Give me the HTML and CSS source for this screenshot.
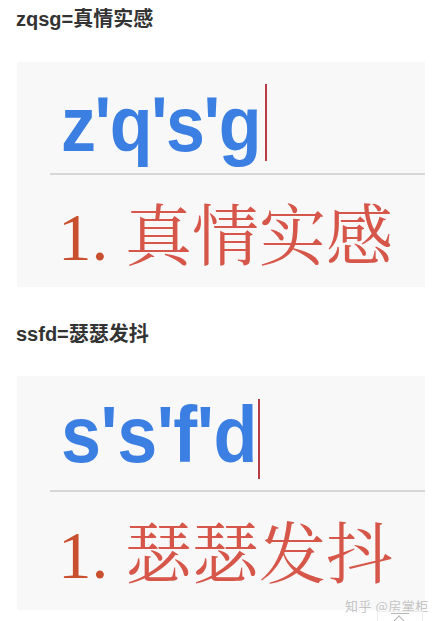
FILE: index.html
```html
<!DOCTYPE html>
<html lang="zh-CN">
<head>
<meta charset="utf-8">
<title>zqsg</title>
<link rel="stylesheet" href="styles.css">
</head>
<body>
<main class="page">
  <p class="title title-first">zqsg=真情实感</p>
  <figure class="shot shot-a">
    <div class="input"><span class="pinyin">z'q's'g</span><span class="caret"></span></div>
    <div class="sep"></div>
    <div class="cand"><span class="num">1.</span> 真情实感</div>
  </figure>
  <p class="title title-second">ssfd=瑟瑟发抖</p>
  <figure class="shot shot-b">
    <div class="input"><span class="pinyin">s's'f'd</span><span class="caret"></span></div>
    <div class="sep"></div>
    <div class="cand"><span class="num">1.</span> 瑟瑟发抖</div>
  </figure>
  <div class="watermark">知乎 @房掌柜</div>
  <div class="totop"><span class="totop-bar"></span><span class="totop-caret"></span></div>
</main>
</body>
</html>
```
FILE: styles.css
```css
html, body {
  margin: 0;
  padding: 0;
  background: #ffffff;
}
.page {
  position: relative;
  height: 621px;
  overflow: hidden;
  display: flex;
  flex-direction: column;
  font-family: "Liberation Sans", "Noto Sans CJK SC", sans-serif;
}
.title {
  margin: 0;
  padding-left: 16px;
  font-size: 20px;
  line-height: 28px;
  font-weight: bold;
  color: #333333;
}
.title-first { margin-top: 5px; }
.title-second { margin-top: 33px; }
.shot {
  margin: 0 0 0 17px;
  width: 408px;
  background: #f8f8f8;
  display: flex;
  flex-direction: column;
}
.shot-a { margin-top: 29px; height: 225px; }
.shot-b { margin-top: 28px; height: 234px; }
.input {
  padding-left: 44px;
  height: 90px;
  font-family: "Liberation Sans", sans-serif;
  font-weight: bold;
  font-size: 70px;
  line-height: 90px;
  color: #3b7fe2;
  white-space: nowrap;
}
.shot-a .input { padding-top: 20px; }
.shot-b .input { padding-top: 16px; }
.pinyin {
  display: inline-block;
  letter-spacing: -1.5px;
  transform: scaleY(1.1);
  transform-origin: 50% 75%;
}
.shot-b .pinyin { font-size: 72px; letter-spacing: -0.5px; }
.caret {
  display: inline-block;
  width: 2px;
  background: #b83a44;
  margin-left: 5px;
}
.shot-a .caret { height: 77px; vertical-align: -10px; }
.shot-b .caret { height: 80px; vertical-align: -17px; margin-left: 1px; }
.sep {
  margin-left: 33px;
  height: 2px;
  background: #d6d6d6;
}
.shot-a .sep { margin-top: 1px; }
.shot-b .sep { margin-top: 8px; }
.cand {
  padding-left: 41px;
  font-family: "Liberation Serif", "Noto Serif CJK SC", "Noto Sans CJK SC", serif;
  font-size: 67px;
  line-height: 80px;
  color: #d6574a;
  white-space: nowrap;
}
.shot-a .cand { padding-top: 22px; }
.shot-b .cand { padding-top: 23px; }
.num { color: #c9502f; }
.watermark {
  position: absolute;
  left: 345px;
  top: 597px;
  font-family: "Noto Sans CJK SC", sans-serif;
  font-size: 13px;
  line-height: 18px;
  color: #c4c4c4;
  letter-spacing: 0.5px;
}
.totop {
  position: absolute;
  left: 377px;
  top: 611px;
  width: 44px;
  height: 30px;
  border: 1px solid #ececec;
  background: #ffffff;
}
.totop-bar {
  position: absolute;
  left: 13px;
  top: 1px;
  width: 18px;
  height: 1px;
  background: #b5b5b5;
}
.totop-caret {
  position: absolute;
  left: 17px;
  top: 5px;
  width: 7px;
  height: 7px;
  border-left: 1px solid #b5b5b5;
  border-top: 1px solid #b5b5b5;
  transform: rotate(45deg);
}
```
